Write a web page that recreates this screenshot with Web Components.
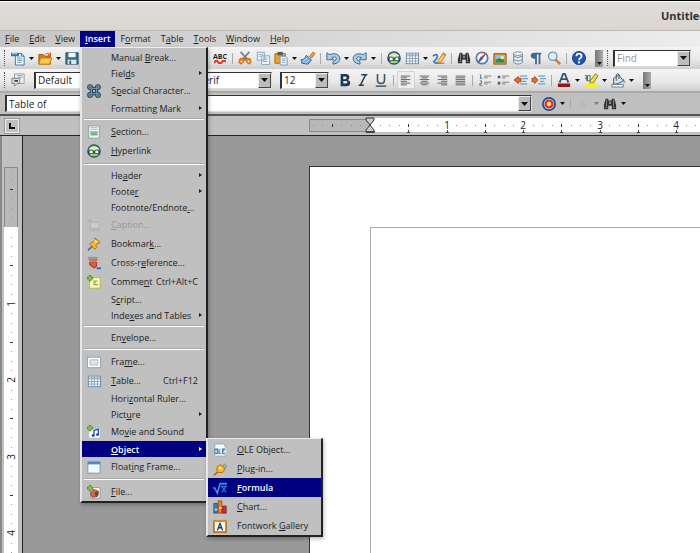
<!DOCTYPE html>
<html lang="en">
<head>
<meta charset="utf-8">
<title>Untitled</title>
<style>
html, body { margin: 0; height: 100%; overflow: hidden; }
body { font-family: "Open Sans", "Noto Sans", sans-serif; font-size: 9px; color: #1c1c1c; background: #999; }
</style>
</head>
<body>
<writer-app></writer-app>
<script>
const arrowHead = '<svg width="5" height="3" viewBox="0 0 5 3"><path d="M0 0h5L2.500 3z" fill="#111"/></svg>';
const wideArrow = '<svg width="7" height="4" viewBox="0 0 7 4"><path d="M0 0h7L3.500 4z" fill="#111"/></svg>';
const lines = (rows, c = '#777') => rows.map(([x, y, w]) => `<path d="M${x} ${y}h${w}" stroke="${c}" stroke-width="1"/>`).join('');
const binoc = '<path d="M3 2h3v2h4V2h3l2 7v5h-5v-4H6v4H1V9z" fill="#333"/><path d="M4 3v8M12 3v8" stroke="#888"/><path d="M2 12h3M11 12h3" stroke="#777"/><path d="M7 5h2v3H7z" fill="#999"/>';
const globe = '<circle cx="8" cy="8" r="7" fill="#7eb84a" stroke="#234e73" stroke-width="1.500"/><path d="M2 5q6-5 12 0l-2 2H4z" fill="#dcefb0"/><path d="M1 8h14v3H1z" fill="#28486a"/><rect x="2.500" y="7" width="4.500" height="4" rx="1" fill="#fff" stroke="#24415c"/><rect x="9" y="7" width="4.500" height="4" rx="1" fill="#fff" stroke="#24415c"/><path d="M4 12.500h8" stroke="#a9d86c" stroke-width="2"/>';
const table = '<rect x="1.500" y="2.500" width="14" height="12" fill="#fff" stroke="#60809c"/><path d="M2 3h13v2H2z" fill="#bdd0df"/><path d="M2 5.500h13M2 8.500h13M2 11.500h13M5.500 3v11M8.500 3v11M12 3v11" stroke="#7f9bb0"/>';
const plus = '<path d="M3.500 0v7M0 3.500h7" stroke="#4a9a20" stroke-width="3"/><path d="M3.500 1v5M1 3.500h5" stroke="#9ade5a"/>';
const aligned = a => lines(a.map((p, i) => [p[0], 3.5 + i * 2, p[1]]), '#555');
const ICONS = {
  new: '<path d="M5 3h7l3 3v10H5z" fill="#f2f8fc" stroke="#376a92"/><path d="M12 3v3h3" fill="none" stroke="#376a92"/><path d="M7 7h4M7 9h6M7 11h6M7 13h5" stroke="#5d94bd"/><path d="M0 2h9v4H0z" fill="#3a77a4"/><path d="M1 3h6" stroke="#cfe6f5"/>',
  open: '<path d="M1 4h5l2 2h6v9H1z" fill="#d87914" stroke="#a55408"/><path d="M3 8h13l-3 7H1z" fill="#fdc94c" stroke="#c8780e"/><path d="M7 5q3-5 6-2l2-2v5h-5l2-2q-2-2-4 1z" fill="#ee5b22"/>',
  save: '<path d="M1 2h14v13H1z" fill="#3c6f91" stroke="#234b68"/><path d="M4 2h8v5H4z" fill="#f8fcff"/><path d="M3 10h10v5H3z" fill="#d7e7ef"/><path d="M5 11h2v4H5z" fill="#31566f"/>',
  cut: '<path d="M3 1l9 10M13 1L4 11" stroke="#77868e" stroke-width="2"/><path d="M7 8l-5 1-1 4 2 2 3-2 2-4zM9 8l5 1 1 4-2 2-3-2-2-4z" fill="#e58a2b" stroke="#b96012"/><circle cx="4" cy="12" r="1" fill="#fff"/><circle cx="12" cy="12" r="1" fill="#fff"/>',
  copy: '<path d="M1.500 1.500h8v9h-8zM6.500 5.500h9v10h-9z" fill="#eef5fa" stroke="#819fb8"/><path d="M3 4h5M3 6h3M8 8h5M8 10h5M8 12h5" stroke="#8eaec6"/>',
  paste: '<path d="M1 3h12v11H1z" fill="#eaa42e" stroke="#a8640e"/><path d="M4 1h6v4H4z" fill="#555b5e"/><path d="M7 6h6l2 2v8H7z" fill="#e6f2fa" stroke="#7592aa"/><path d="M9 9h4M9 11h4M9 13h4" stroke="#87a9c2"/>',
  brush: '<path d="M10 6l4-5 2 2-4 5z" fill="#e8a43a" stroke="#a96a15"/><path d="M6 5l6 5-4 5-7-1-1-4 4-1z" fill="#70b0e8" stroke="#245e9d"/><path d="M2 12l5-4M5 14l4-4" stroke="#d8efff"/>',
  undo: '<path d="M1 2v8h8L6.500 7.500q4.500-2 5.500.5 0 3-4 4v3q8-1 8-7Q14 1 4 4z" fill="#a9cfe7" stroke="#2b5f87"/>',
  redo: '<path d="M15 2v8H7l2.500-2.500Q5 5.500 4 8q0 3 4 4v3Q0 14 0 8 2 1 12 4z" fill="#a9cfe7" stroke="#2b5f87"/>',
  globe, table, binoc,
  draw: '<path d="M1 6q3-3 5-1 1 3-4 7 2 3 6 1" fill="none" stroke="#3674c6" stroke-width="1.800"/><path d="M7 11l6-9 3 2-6 9-4 1z" fill="#ffd04c" stroke="#b67818"/><path d="M13 2l3 2-1 2-4-2z" fill="#e9837b"/><path d="M7 14h7" stroke="#d43e2b"/>',
  compass: '<circle cx="8" cy="8" r="6.500" fill="#f1f7fd" stroke="#5d7ba8" stroke-width="2"/><path d="M13 2L9 9 6 7z" fill="#d83d24"/><path d="M3 14l3-7 3 2z" fill="#2454a1"/>',
  gallery: '<path d="M1 3h14v12H1z" fill="#d9972b" stroke="#825210"/><path d="M3 5h10v8H3z" fill="#8ac5ef"/><path d="M3 10l4-2 6 2v3H3z" fill="#398641"/><path d="M9 6h3v3H9z" fill="#fff39a"/>',
  db: '<path d="M3 3v10q5 4 10 0V3z" fill="#e8edf0" stroke="#687e8e"/><ellipse cx="8" cy="3" rx="5" ry="2" fill="#fff" stroke="#687e8e"/><path d="M3 6q5 3 10 0M3 10q5 3 10 0" fill="none" stroke="#687e8e"/>',
  pilcrow: '<path d="M14 2H6Q2 2 2 5.500T7 9v6h2V4h2v11h2V4h1z" fill="#3c6993"/>',
  zoom: '<path d="M9 9l6 6" stroke="#c58135" stroke-width="3"/><circle cx="6.500" cy="6" r="4.800" fill="#d9effc" stroke="#7a96ae" stroke-width="1.500"/><path d="M4 5q2-3 4-1" fill="none" stroke="#fff"/>',
  help: '<circle cx="8" cy="8" r="7.500" fill="#1e55b4" stroke="#173b7d"/><path d="M5 6q0-3 3-3t3 3q0 1-2 2.500-1 .5-1 2" fill="none" stroke="#fff" stroke-width="2"/><circle cx="8" cy="13" r="1.200" fill="#fff"/>',
  styles: '<path d="M4 1h11v11H4z" fill="#edf0f0" stroke="#8b969c"/><path d="M7 3h6M8 5h5" stroke="#8d989f"/><path d="M1 6h9v6H7l-3 3v-3H1z" fill="#d2dadd" stroke="#6e7b84"/><path d="M4 8h4v2H4z" fill="#35424e"/>',
  bold: '<path fill-rule="evenodd" d="M3 1h6q4 0 4 4 0 2-2 3 3 1 3 3 0 4-5 4H3zM6 4v3h2q2 0 2-1.500T8 4zM6 9v3h2q3 0 3-1.500T8 9z" fill="#1b3850"/>',
  italic: '<path d="M6 2h7M3 14h6M11 2L5 14" stroke="#263f52" stroke-width="1.800"/>',
  underline: '<path d="M4 1v7q0 4 4 4t4-4V1" fill="none" stroke="#3f5364" stroke-width="1.800"/><path d="M2 15h12" stroke="#344755" stroke-width="1.500"/>',
  left: aligned([[2, 11], [2, 7], [2, 11], [2, 7], [2, 11], [2, 7]]),
  center: aligned([[3, 11], [5, 7], [3, 11], [5, 7], [3, 11], [5, 7]]),
  right: aligned([[3, 11], [7, 7], [3, 11], [7, 7], [3, 11], [7, 7]]),
  just: aligned([[3, 11], [3, 11], [3, 11], [3, 11], [3, 11], [3, 11]]),
  numbering: '<path d="M2 2h1v4M2 6h3M2 9h2v3H2v2h3" fill="none" stroke="#456f94"/>' + lines([[7, 3.5, 8], [7, 5.5, 4], [7, 10.5, 8], [7, 12.5, 4]]),
  bullets: '<path d="M2 3h3v3H2zM2 10h3v3H2z" fill="#456078"/>' + lines([[7, 3.5, 8], [7, 5.5, 4], [7, 10.5, 8], [7, 12.5, 4]]),
  dedent: '<path d="M0 8l5-4v2h3v4H5v2z" fill="#dd7234" stroke="#ad3c12"/>' + lines([[7, 3.5, 8], [9, 6.5, 7], [9, 9.5, 5], [7, 12.5, 8]], '#3f82b5'),
  indent: '<path d="M7 8L3 4v2H0v4h3v2z" fill="#dd7234" stroke="#ad3c12"/>' + lines([[7, 3.5, 8], [9, 6.5, 7], [9, 9.5, 5], [7, 12.5, 8]], '#3f82b5'),
  color: '<path d="M3 11L7 1h2l4 10M5 7h6" fill="none" stroke="#36536b" stroke-width="2"/><path d="M1 12h14v4H1z" fill="#9c1515"/>',
  mark: '<path d="M1 3h2v6M4 3h3v6H4zM1 6h2" fill="none" stroke="#41596b"/><path d="M7 9l6-8 3 2-5 8-4 1z" fill="#f3e43b" stroke="#786d17"/><path d="M1 12h14v4H1z" fill="#f5f129"/>',
  bucket: '<path d="M3 6l6-4 5 7-6 3-5 1z" fill="#d8e5ec" stroke="#304c62"/><path d="M6 9V2q2-3 3 0v5" fill="none" stroke="#354b5c"/><path d="M13 6q4 3 2 6z" fill="#397ba8"/><path d="M1 13h13v3H1z" fill="#fff" stroke="#587083"/>',
  target: '<circle cx="8" cy="8" r="7" fill="#cfe0f8" stroke="#244b91" stroke-width="2"/><circle cx="8" cy="8" r="4" fill="#f8bd42" stroke="#d13427" stroke-width="2.500"/><path d="M7 7h2v2H7z" fill="#fff"/>',
  star: '<path d="M8 3l2 4 5 1-4 2 1 5-4-3-4 3 1-5-4-2 5-1z" fill="#b9b9b9"/>',
  special: '<path d="M5 5v6h6V5zM5 5H3.500a1.500 1.500 0 111.500-1.500zM11 5V3.500A1.500 1.500 0 1112.500 5zM11 11h1.500a1.500 1.500 0 11-1.500 1.500zM5 11v1.500A1.500 1.500 0 113.500 11z" fill="none" stroke="#233e54" stroke-width="3.600"/><path d="M5 5v6h6V5zM5 5H3.500a1.500 1.500 0 111.500-1.500zM11 5V3.500A1.500 1.500 0 1112.500 5zM11 11h1.500a1.500 1.500 0 11-1.500 1.500zM5 11v1.500A1.500 1.500 0 113.500 11z" fill="none" stroke="#6d90aa" stroke-width="1.600"/>',
  section: '<path d="M2 1h12v14H2z" fill="#f6fafc" stroke="#8799a5"/><path d="M4 3h8M4 5h8" stroke="#9cb5c6"/><path d="M4 7h8v5H4z" fill="#82b553"/><path d="M4 7h8v2H4z" fill="#8bbce0"/>',
  caption: '<path d="M4 5h10v7H4z" fill="#ccc" stroke="#b0b0b0"/><path d="M3 14h12M3 1v5M0 3h6" stroke="#adadad"/>',
  bookmark: '<path d="M7 10l-6 5" stroke="#3d6297" stroke-width="1.500"/><path d="M9 1l6 5-2 2-1-1-2 3 1 2-2 2-6-6 2-2h2l3-3-1-1z" fill="#f5b832" stroke="#a66a0b"/><path d="M9 4l2 2" stroke="#fff1a5" stroke-width="2"/>',
  cross: '<path d="M1 2h11" stroke="#80949e" stroke-width="2"/><path d="M2 4.500h10" stroke="#d8673f" stroke-width="2"/><path d="M3 7h8v5H9v2l-5-3 1-1H3z" fill="#e85b35" stroke="#a33219"/><path d="M11 14h5" stroke="#315ed5" stroke-width="2"/>',
  comment: '<path d="M3 3h12v12H3z" fill="#ffffb1" stroke="#bab13e"/><path d="M7 7h5M7 9h3M7 11h6" stroke="#727452"/>' + plus,
  frame: '<path d="M.5 2.500h15v12H.5z" fill="#fff" stroke="#8b9aa9"/><path d="M3.500 5.500h9v6h-9z" fill="#e0e5ea" stroke="#a8b6c0"/>',
  movie: '<path d="M2 4h13v11H2z" fill="#fff" stroke="#b0bdd2"/><path d="M8 12V6l5-1v6" fill="none" stroke="#294caf" stroke-width="1.500"/><circle cx="7" cy="12" r="1.700" fill="#294caf"/><circle cx="12" cy="11" r="1.700" fill="#294caf"/>' + plus,
  float: '<path d="M1 2h14v13H1z" fill="#f5f9fc" stroke="#7592b2"/><path d="M1 2h14v3H1z" fill="#4a8ad5"/>',
  file: '<path d="M4 3h11v12H4z" fill="#f9fafa" stroke="#8c9499"/><path d="M7 5l6 2-1 6-6 1-2-4z" fill="#dc6547" stroke="#8e3828"/><path d="M9 8h4v4H9z" fill="#713c31"/>' + plus,
  ole: '<path d="M2 1h10l2 3v11H2z" fill="#f4fafd" stroke="#8ca5b8"/><path d="M1 6h14v7H1z" fill="#d9ebf6"/><path d="M2 7h3v5H2zM7 7v5h2M14 7h-3v5h3M11 9h2" fill="none" stroke="#3f7ca9" stroke-width="1.300"/>',
  plugin: '<path d="M6 11l-5 4" stroke="#b36615" stroke-width="2"/><path d="M9 3l5 5-3 4H6L4 9l1-4z" fill="#f7b530" stroke="#b46a0b"/><path d="M11 5l3-3M13 7l3-3" stroke="#82888d" stroke-width="1.500"/><path d="M7 6l3 2" stroke="#ffeb96" stroke-width="2"/>',
  formula: '<path d="M0 8h2l3 6L8 3h8" fill="none" stroke="#3d8ff0" stroke-width="1.800"/><path d="M10 6l5 7M15 6l-5 7M9 6h7" stroke="#286dca" stroke-width="1.600"/>',
  chart: '<path d="M1 4h4v11H1z" fill="#3482c4" stroke="#1c5284"/><path d="M6 1h4v14H6z" fill="#f27c32" stroke="#a7410d"/><path d="M11 7h4v8h-4z" fill="#c93131" stroke="#851a1a"/><path d="M2 11h3M7 9h3" stroke="#ffd06a" stroke-width="2"/>',
  fontwork: '<path d="M1 2h14v13H1z" fill="#f5f6f7" stroke="#bd741f" stroke-width="2"/><path d="M0 2h16" stroke="#d98b2c" stroke-width="2"/><path d="M5 13l3-8 3 8M6 10h4" fill="none" stroke="#253746" stroke-width="1.500"/>'
};

const define = (name, html, setup) => {
  const t = document.createElement('template');
  t.innerHTML = `<style>*{box-sizing:border-box}button{font:inherit;color:inherit;border:0;background:none;padding:0;margin:0}svg{display:block}</style>` + html;
  customElements.define(name, class extends HTMLElement {
    connectedCallback() {
      if (this.shadowRoot) return;
      this.attachShadow({ mode: 'open' }).append(t.content.cloneNode(true));
      if (setup) setup(this.shadowRoot, this);
    }
  });
};

define('ui-icon', `<style>:host{display:block;width:14px;height:14px;flex:none}svg{width:100%;height:100%;overflow:visible}</style><svg viewBox="0 0 16 16" aria-hidden="true"></svg>`,
  (r, h) => { r.querySelector('svg').innerHTML = ICONS[h.getAttribute('name')] || ''; });

define('tool-button', `<style>
:host{display:flex;flex:none}button{width:18px;height:18px;display:grid;place-items:center}
.arrow{width:9px}.arrow[hidden]{display:none}
:host([disabled]) .arrow{opacity:.4}
:host([on]) .main{background:#eee;box-shadow:inset 0 0 0 1px #d2d2d2}
</style><button class="main"><slot></slot></button><button class="arrow" aria-label="More" hidden>${arrowHead}</button>`,
  (r, h) => {
    const main = r.querySelector('.main'), icon = h.getAttribute('icon');
    main.setAttribute('aria-label', icon || 'spelling');
    if (icon) main.innerHTML = `<ui-icon name="${icon}"></ui-icon>`;
    r.querySelector('.arrow').hidden = !h.hasAttribute('drop');
    if (h.hasAttribute('disabled')) main.disabled = true;
  });

define('spell-mark', `<style>:host{display:block;font-size:7px;font-weight:700;line-height:7px;color:#222}svg{margin:auto}</style>ABC<svg width="12" height="4" viewBox="0 0 12 4"><path d="M0 3q2-4 4-1t4 0 4 0" fill="none" stroke="#e03020" stroke-width="2"/></svg>`);
define('tool-sep', `<style>:host{display:flex;flex:none;width:7px;height:11px;justify-content:center}i{width:1px;background:#aaa}</style><i></i>`);
define('tool-handle', `<style>:host{display:flex;flex:none;width:9px;height:16px;justify-content:center}i{border-left:1px dotted #555}</style><i></i>`);
define('tool-overflow', `<style>:host{display:block;flex:none}button{width:8px;height:17px;background:linear-gradient(90deg,#777,#aaa);display:flex;align-items:flex-end;justify-content:center;padding-bottom:2px}</style><button aria-label="More tools">${arrowHead}</button>`);

define('combo-box', `<style>
:host{display:flex;flex:none;height:17px;background:#fff;border:1px solid;border-color:#333 #ddd #ddd #333;border-left-width:2px}
input{flex:1;min-width:0;border:0;outline:0;padding:0 2px;background:none;font:inherit;font-size:10px;color:inherit}
input::placeholder{color:#999;opacity:1}
button{width:13px;background:#bcbcbc;border:1px solid;border-color:#eee #444 #444 #eee;display:grid;place-items:center}
</style><input><button aria-label="Open list">${wideArrow}</button>`,
  (r, h) => {
    const i = r.querySelector('input');
    i.setAttribute('aria-label', h.getAttribute('label'));
    i.value = h.getAttribute('value') || '';
    i.placeholder = h.getAttribute('placeholder') || '';
  });

define('tool-bar', `<style>
:host{display:flex;align-items:center;height:22px;flex:none;overflow:hidden;background:linear-gradient(#f4f4f4,#e9e9e9 55%,#cfcfcf)}
:host([flat]){background:#c0c0c0}
</style><slot></slot>`);

define('menu-panel', `<style>
:host{display:block;background:#c0c0c0;border:solid;border-width:1px 2px 2px;border-color:#eee #222 #222 #e6e6e6;padding:1px 0 0;box-shadow:1px 2px 4px #0004}
</style><div role="menu"><slot></slot></div>`);

define('menu-row', `<style>
:host{display:block;position:relative}
button{width:100%;height:16px;padding:0 4px 0 5px;display:flex;align-items:center;text-align:left;white-space:nowrap}
:host([icon]) button{height:19px}
.pic{width:14px;margin-right:10px;flex:none}
.key{margin:0 4px 0 auto}
.tip{margin-left:auto}
:host([on]) button{background:#000080;color:#fff;font-weight:600}
:host([disabled]) button{color:#999}
::slotted(menu-panel){position:absolute;left:124px;top:-3px;width:117px;z-index:2}
</style><button role="menuitem"><span class="pic"></span><span><slot></slot></span><span class="key"></span><svg class="tip" width="3" height="4" viewBox="0 0 3 4"><path d="M0 0l3 2-3 2z" fill="currentColor"/></svg></button><slot name="sub"></slot>`,
  (r, h) => {
    const icon = h.getAttribute('icon');
    if (icon) r.querySelector('.pic').innerHTML = `<ui-icon name="${icon}"></ui-icon>`;
    const key = r.querySelector('.key'), tip = r.querySelector('.tip');
    if (h.hasAttribute('key')) key.textContent = h.getAttribute('key'); else key.remove();
    if (!h.hasAttribute('more')) tip.remove();
    if (h.hasAttribute('disabled')) r.querySelector('button').disabled = true;
  });

define('menu-sep', `<style>:host{display:flex;height:6px;align-items:center;padding:0 2px}:host([wide]){height:7px}i{flex:1;height:2px;border-top:1px solid #aaa;border-bottom:1px solid #fff}</style><i></i>`);

define('menu-entry', `<style>
:host{display:block;position:relative}
button{height:16px;padding:0 5px;display:block;line-height:16px}
:host([on]) button{background:#000080;color:#fff;font-weight:600}
::slotted(menu-panel){position:absolute;left:0;top:100%;width:128px;z-index:5}
</style><button><slot></slot></button><slot name="sub"></slot>`);

define('title-bar', `<style>
:host{display:flex;align-items:center;justify-content:flex-end;height:31px;flex:none;border-top:1px solid #000;border-bottom:1px solid #bfb8b0;box-shadow:inset 0 1px #fff;background:linear-gradient(#e0ddd9,#dad6d1)}
div{width:39px;white-space:nowrap;font-size:11px;font-weight:700;line-height:16px;color:#2e3436}
</style><div><slot></slot></div>`);

const INCH = 153 / 2;
const ticks = (origin, length, draw) => {
  let out = '';
  for (let n = -6; origin + n * INCH / 8 < length; n++) if (n) out += draw(Math.round(origin + n * INCH / 8), n);
  return out;
};
const fits = (pos, length) => pos + 5 < length;

define('ruler-top', `<style>
:host{display:flex;height:22px;flex:none;background:#c0c0c0;border-top:2px solid #555;border-bottom:1px solid #222}
button{margin:3px 0 0 5px;width:14px;height:14px;border:1px solid #eee;outline:1px solid #999;display:grid;place-items:center;flex:none}
svg.r{flex:1;min-width:0;height:19px;margin-left:290px;font-size:10px}
</style><button aria-label="Tab type"><svg width="6" height="6"><path d="M1 0v5h5" fill="none" stroke="#111" stroke-width="2"/></svg></button><svg class="r"></svg>`,
  r => {
    const draw = () => {
      const len = innerWidth - 309;
      r.querySelector('.r').innerHTML =
        '<path d="M.5 3.500h61v12H.5z" fill="#b8b8b8" stroke="#888"/><rect x="61" y="2" width="100%" height="14" fill="#fff"/>' +
        ticks(61, len, (x, n) => n % 8 === 0
          ? (fits(x, len) ? `<text x="${x}" y="13" text-anchor="middle" fill="#222">${n / 8}</text>` : '')
          : `<rect x="${x}" y="${n % 4 ? 9 : 8}" width="1" height="${n % 4 ? 1 : 3}" fill="${n % 4 ? '#888' : '#333'}"/>`) +
        ticks(61, len, (x, n) => n > 0 && n % 4 === 0 ? `<path d="M${x - 1} 16.500h3M${x + .5} 14v3" stroke="#444"/>` : '') +
        '<path d="M57 2h8v2l-4 5 4 5v2h-8v-2l4-5-4-5z" fill="#ccc" stroke="#333"/><path d="M57 16h9" stroke="#111"/>';
    };
    draw();
    addEventListener('resize', draw);
  });

define('ruler-side', `<style>
:host{display:block;width:23px;flex:none;background:#c0c0c0;border-left:2px solid #888;border-right:1px solid #222}
svg{width:20px;height:100%;font-size:10px}
</style><svg></svg>`,
  r => {
    const draw = () => {
      const len = innerHeight - 136;
      r.querySelector('svg').innerHTML =
        '<path d="M2.500 31.500h13v60h-13z" fill="#b8b8b8" stroke="#888"/><rect x="2" y="91" width="14" height="100%" fill="#fff"/>' +
        ticks(91, len, (y, n) => n % 8 === 0
          ? (fits(y, len) ? `<text transform="translate(13 ${y}) rotate(-90)" text-anchor="middle" fill="#222">${n / 8}</text>` : '')
          : `<rect x="${n % 4 ? 9 : 8}" y="${y}" width="${n % 4 ? 1 : 3}" height="1" fill="${n % 4 ? '#999' : '#333'}"/>`);
    };
    draw();
    addEventListener('resize', draw);
  });

define('doc-page', `<style>
:host{display:flex;flex:1;min-width:0;margin:30px 0 0 286px;padding:60px 0 0 60px;background:#fff;border:solid #333;border-width:1px 0 0 1px}
div{flex:1;border:solid #aaa;border-width:1px 0 0 1px}
</style><div></div>`);

define('insert-menu', `<style>:host{display:contents}u{text-underline-offset:1px}</style>
<menu-row>Manual <u>B</u>reak...</menu-row>
<menu-row more>Fiel<u>d</u>s</menu-row>
<menu-row icon="special">S<u>p</u>ecial Character...</menu-row>
<menu-row more>Formattin<u>g</u> Mark</menu-row>
<menu-sep></menu-sep>
<menu-row icon="section"><u>S</u>ection...</menu-row>
<menu-row icon="globe"><u>H</u>yperlink</menu-row>
<menu-sep wide></menu-sep>
<menu-row more>He<u>a</u>der</menu-row>
<menu-row more>Foote<u>r</u></menu-row>
<menu-row>Footnote/Endnote<u>.</u>..</menu-row>
<menu-row icon="caption" disabled><u>C</u>aption...</menu-row>
<menu-row icon="bookmark">Bookmar<u>k</u>...</menu-row>
<menu-row icon="cross">Cross-r<u>e</u>ference...</menu-row>
<menu-row icon="comment" key="Ctrl+Alt+C">Comme<u>n</u>t</menu-row>
<menu-row>S<u>c</u>ript...</menu-row>
<menu-row more>Inde<u>x</u>es and Tables</menu-row>
<menu-sep></menu-sep>
<menu-row>En<u>v</u>elope...</menu-row>
<menu-sep wide></menu-sep>
<menu-row icon="frame">Fra<u>m</u>e...</menu-row>
<menu-row icon="table" key="Ctrl+F12"><u>T</u>able...</menu-row>
<menu-row>Hori<u>z</u>ontal Ruler...</menu-row>
<menu-row more>Pict<u>u</u>re</menu-row>
<menu-row icon="movie">Mo<u>v</u>ie and Sound</menu-row>
<menu-row on more><u>O</u>bject
  <menu-panel slot="sub">
    <menu-row icon="ole"><u>O</u>LE Object...</menu-row>
    <menu-row icon="plugin"><u>P</u>lug-in...</menu-row>
    <menu-row icon="formula" on><u>F</u>ormula</menu-row>
    <menu-row icon="chart"><u>C</u>hart...</menu-row>
    <menu-row icon="fontwork">Fontwork <u>G</u>allery</menu-row>
  </menu-panel>
</menu-row>
<menu-row icon="float">Float<u>i</u>ng Frame...</menu-row>
<menu-sep></menu-sep>
<menu-row icon="file"><u>F</u>ile...</menu-row>`);

define('writer-app', `<style>
:host{display:flex;flex-direction:column;height:100vh}
nav{display:flex;height:16px;flex:none;background:linear-gradient(90deg,#c6c6c6,#ededed);position:relative;z-index:3}
u{text-underline-offset:1px}
main{display:flex;flex:1;min-height:0}
.behind{width:130px;flex:none}
.gap{width:7px;flex:none}
.style{width:104px;margin-left:7px}.font{width:128px;margin:0 8px 0 6px}.size{width:49px;margin-right:7px}
.find{width:78px;margin-left:1px}.name{flex:1;margin-left:5px}
.tools{display:flex;align-items:center;flex:0 0 168px;padding-left:8px}
.strip{border-top:2px solid #aaa;height:23px}
</style>
<title-bar>Untitled</title-bar>
<nav aria-label="Menu bar">
<menu-entry><u>F</u>ile</menu-entry><menu-entry><u>E</u>dit</menu-entry><menu-entry><u>V</u>iew</menu-entry>
<menu-entry on><u>I</u>nsert<menu-panel slot="sub"><insert-menu></insert-menu></menu-panel></menu-entry>
<menu-entry>F<u>o</u>rmat</menu-entry><menu-entry>T<u>a</u>ble</menu-entry><menu-entry><u>T</u>ools</menu-entry><menu-entry><u>W</u>indow</menu-entry><menu-entry><u>H</u>elp</menu-entry>
</nav>
<tool-bar>
<tool-handle></tool-handle><tool-button icon="new" drop></tool-button><tool-button icon="open" drop></tool-button><tool-button icon="save"></tool-button>
<span class="behind"></span>
<tool-button><spell-mark></spell-mark></tool-button><tool-sep></tool-sep>
<tool-button icon="cut"></tool-button><tool-button icon="copy"></tool-button><tool-button icon="paste" drop></tool-button><tool-button icon="brush"></tool-button><tool-sep></tool-sep>
<tool-button icon="undo" drop></tool-button><tool-button icon="redo" drop></tool-button><tool-sep></tool-sep>
<tool-button icon="globe"></tool-button><tool-button icon="table" drop></tool-button><tool-button icon="draw"></tool-button><tool-sep></tool-sep>
<tool-button icon="binoc"></tool-button><tool-button icon="compass"></tool-button><tool-button icon="gallery"></tool-button><tool-button icon="db"></tool-button><tool-button icon="pilcrow"></tool-button><tool-button icon="zoom"></tool-button><tool-sep></tool-sep>
<tool-button icon="help"></tool-button><span class="gap"></span><tool-overflow></tool-overflow><tool-handle></tool-handle>
<combo-box class="find" label="Find" placeholder="Find"></combo-box>
</tool-bar>
<tool-bar>
<tool-handle></tool-handle><tool-button icon="styles"></tool-button>
<combo-box class="style" label="Paragraph style" value="Default"></combo-box>
<combo-box class="font" label="Font name" value="Liberation Serif"></combo-box>
<combo-box class="size" label="Font size" value="12"></combo-box>
<tool-button icon="bold"></tool-button><tool-button icon="italic"></tool-button><tool-button icon="underline"></tool-button><tool-sep></tool-sep>
<tool-button icon="left" on></tool-button><tool-button icon="center"></tool-button><tool-button icon="right"></tool-button><tool-button icon="just"></tool-button><tool-sep></tool-sep>
<tool-button icon="numbering"></tool-button><tool-button icon="bullets"></tool-button><tool-button icon="dedent"></tool-button><tool-button icon="indent"></tool-button><tool-sep></tool-sep>
<tool-button icon="color" drop></tool-button><tool-button icon="mark" drop></tool-button><tool-button icon="bucket" drop></tool-button><span class="gap"></span><tool-overflow></tool-overflow>
</tool-bar>
<tool-bar flat class="strip">
<combo-box class="name" label="Name box" value="Table of"></combo-box>
<div class="tools"><tool-button icon="target" drop></tool-button><tool-sep></tool-sep><tool-button icon="star" drop disabled></tool-button><tool-button icon="binoc" drop></tool-button></div>
</tool-bar>
<ruler-top></ruler-top>
<main><ruler-side></ruler-side><doc-page></doc-page></main>`);
</script>
</body>
</html>
